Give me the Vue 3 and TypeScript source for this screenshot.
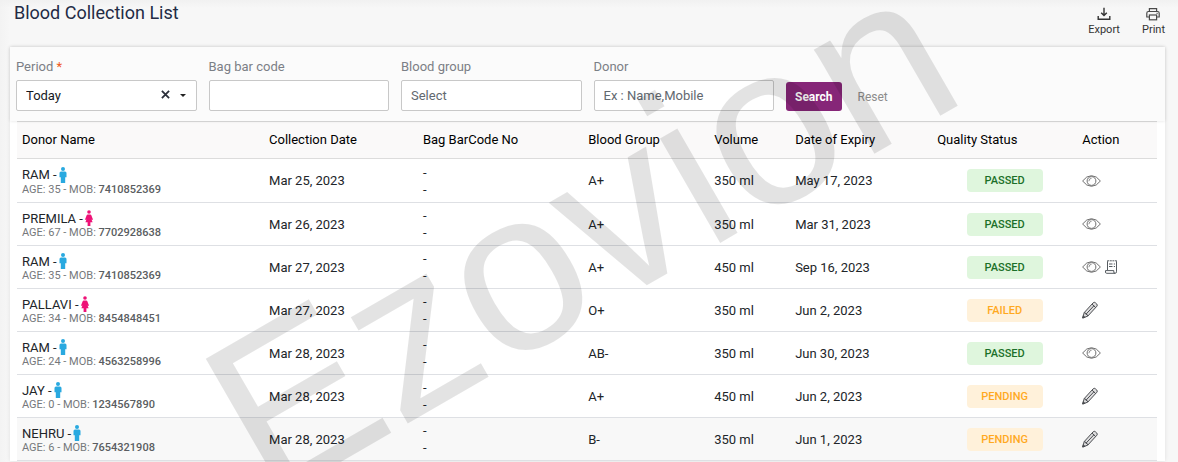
<script setup lang="ts">
import { ref } from 'vue'

type Status = 'PASSED' | 'FAILED' | 'PENDING'
type Gender = 'male' | 'female'
type Action = 'view' | 'report' | 'edit'

interface Collection {
  name: string
  gender: Gender
  age: number
  mobile: string
  collected: string
  group: string
  volume: string
  expiry: string
  status: Status
  actions: Action[]
}

const columns = [
  { label: 'Donor Name', key: 'name' },
  { label: 'Collection Date', key: 'date' },
  { label: 'Bag BarCode No', key: 'bag' },
  { label: 'Blood Group', key: 'group' },
  { label: 'Volume', key: 'volume' },
  { label: 'Date of Expiry', key: 'expiry' },
  { label: 'Quality Status', key: 'status' },
  { label: 'Action', key: 'action' },
]

const rows: Collection[] = [
  { name: 'RAM', gender: 'male', age: 35, mobile: '7410852369', collected: 'Mar 25, 2023', group: 'A+', volume: '350 ml', expiry: 'May 17, 2023', status: 'PASSED', actions: ['view'] },
  { name: 'PREMILA', gender: 'female', age: 67, mobile: '7702928638', collected: 'Mar 26, 2023', group: 'A+', volume: '350 ml', expiry: 'Mar 31, 2023', status: 'PASSED', actions: ['view'] },
  { name: 'RAM', gender: 'male', age: 35, mobile: '7410852369', collected: 'Mar 27, 2023', group: 'A+', volume: '450 ml', expiry: 'Sep 16, 2023', status: 'PASSED', actions: ['view', 'report'] },
  { name: 'PALLAVI', gender: 'female', age: 34, mobile: '8454848451', collected: 'Mar 27, 2023', group: 'O+', volume: '350 ml', expiry: 'Jun 2, 2023', status: 'FAILED', actions: ['edit'] },
  { name: 'RAM', gender: 'male', age: 24, mobile: '4563258996', collected: 'Mar 28, 2023', group: 'AB-', volume: '350 ml', expiry: 'Jun 30, 2023', status: 'PASSED', actions: ['view'] },
  { name: 'JAY', gender: 'male', age: 0, mobile: '1234567890', collected: 'Mar 28, 2023', group: 'A+', volume: '450 ml', expiry: 'Jun 2, 2023', status: 'PENDING', actions: ['edit'] },
  { name: 'NEHRU', gender: 'male', age: 6, mobile: '7654321908', collected: 'Mar 28, 2023', group: 'B-', volume: '350 ml', expiry: 'Jun 1, 2023', status: 'PENDING', actions: ['edit'] },
]

const period = ref('Today')
const bagCode = ref('')
const group = ref('')
const donor = ref('')

function reset() {
  period.value = 'Today'
  bagCode.value = ''
  group.value = ''
  donor.value = ''
}
</script>

<template>
  <main class="page">
    <header class="top">
      <h1>Blood Collection List</h1>
      <div class="tools">
        <button type="button" class="tool">
          <svg width="14" height="14" viewBox="0 0 14 14" fill="none" stroke="#333" stroke-width="1.4">
            <path d="M7 0.8V8.5M4.2 5.8L7 8.6L9.8 5.8" />
            <path d="M1.2 9V12.2H12.8V9" />
          </svg>
          Export
        </button>
        <button type="button" class="tool">
          <svg width="14" height="14" viewBox="0 0 14 14" fill="none" stroke="#4a4a4a" stroke-width="1.2">
            <path d="M3.4 4.5V1.6H10.6V4.5" />
            <path d="M3.2 10H0.8V6.2Q0.8 4.5 2.4 4.5H11.6Q13.2 4.5 13.2 6.2V10H10.8" />
            <rect x="3.4" y="8" width="7.2" height="4.8" />
            <path d="M10.6 6.3H11.6" />
          </svg>
          Print
        </button>
      </div>
    </header>

    <section class="card">
      <form class="filters" @submit.prevent>
        <div class="field">
          <label for="period">Period <span class="req">*</span></label>
          <div class="control">
            <select id="period" v-model="period" class="box">
              <option value=""></option>
              <option>Today</option>
              <option>Yesterday</option>
            </select>
            <button type="button" class="clear" aria-label="Clear period" @click="period = ''">
              <svg width="9" height="9" viewBox="0 0 10 10" stroke="#2b2f3a" stroke-width="2">
                <path d="M1 1L9 9M9 1L1 9" />
              </svg>
            </button>
            <svg class="caret" width="6" height="3" viewBox="0 0 6 3"><path d="M0 0H6L3 3Z" fill="#222" /></svg>
          </div>
        </div>
        <div class="field">
          <label for="bag">Bag bar code</label>
          <input id="bag" v-model="bagCode" type="text" class="box" />
        </div>
        <div class="field">
          <label for="group">Blood group</label>
          <select id="group" v-model="group" class="box" :class="{ empty: !group }">
            <option value="">Select</option>
            <option>A+</option>
            <option>AB-</option>
            <option>B-</option>
            <option>O+</option>
          </select>
        </div>
        <div class="field">
          <label for="donor">Donor</label>
          <input id="donor" v-model="donor" type="text" class="box" placeholder="Ex : Name,Mobile" />
        </div>
        <div class="buttons">
          <button type="submit" class="search">Search</button>
          <button type="button" class="reset" @click="reset">Reset</button>
        </div>
      </form>

      <div class="list">
        <table>
          <colgroup>
            <col v-for="c in columns" :key="c.key" :class="'col-' + c.key" />
          </colgroup>
          <thead>
            <tr>
              <th v-for="c in columns" :key="c.key" scope="col">{{ c.label }}</th>
            </tr>
          </thead>
          <tbody>
            <tr v-for="(r, i) in rows" :key="i" :class="{ hovered: i === 6 }">
              <td class="who">
                <div class="donor">
                  <span>{{ r.name }} -</span>
                  <svg v-if="r.gender === 'male'" width="8" height="16" viewBox="0 0 8 16" fill="#29a9e0">
                    <circle cx="4" cy="2" r="2" />
                    <path d="M2 4.5H6Q7.5 4.5 7.5 6V10.2H6.2V16H1.8V10.2H0.5V6Q0.5 4.5 2 4.5Z" />
                  </svg>
                  <svg v-else width="8" height="16" viewBox="0 0 8 16" fill="#ee1277">
                    <circle cx="4" cy="2" r="1.8" />
                    <path d="M2.6 4.4H5.4L6.2 5L8 9.4L6.9 10L6.2 8.8L7.6 12.2H5.4V16H2.6V12.2H0.4L1.8 8.8L1.1 10L0 9.4L1.8 5Z" />
                  </svg>
                </div>
                <div class="meta">AGE: {{ r.age }} - MOB: <b>{{ r.mobile }}</b></div>
              </td>
              <td>{{ r.collected }}</td>
              <td class="bag"><div>-</div><div>-</div></td>
              <td>{{ r.group }}</td>
              <td>{{ r.volume }}</td>
              <td>{{ r.expiry }}</td>
              <td class="status"><span class="badge" :class="r.status.toLowerCase()">{{ r.status }}</span></td>
              <td>
                <div class="actions">
                  <button v-for="a in r.actions" :key="a" type="button" :aria-label="a">
                    <svg v-if="a === 'view'" width="19" height="12" viewBox="0 0 19 12" fill="none" stroke="#707070">
                      <path d="M0.6 6Q4.5 0.7 9.5 0.7T18.4 6Q14.5 11.3 9.5 11.3T0.6 6Z" />
                      <circle cx="9.5" cy="6" r="4.4" />
                      <path d="M9.6 3.2Q6.9 3.5 6.9 6.2" stroke-width="0.8" />
                    </svg>
                    <svg v-else-if="a === 'report'" width="12" height="14" viewBox="0 0 12 14" fill="none" stroke="#555b60">
                      <path d="M2.5 10V1.2M11.5 1.2V11.8Q11.5 13.3 10 13.3H1.6Q0.5 13.3 0.5 12V10.6H8.8V12Q8.8 13.3 10 13.3" />
                      <path d="M2.2 0.8H11.8" stroke-dasharray="2 0.6" />
                      <path d="M4 4H7.5M4 6.5H7.5M8.8 4H10M8.8 6.5H10" stroke-width="1.1" />
                    </svg>
                    <svg v-else width="16" height="18" viewBox="0 0 16 18" fill="none" stroke="#4a4c50" stroke-linejoin="round">
                      <path d="M0.7 17L2.2 11.6L11.2 1.8Q12.2 0.7 13.4 1.8L14.8 3.1Q15.8 4.1 14.9 5.2L5.8 15.1Z" fill="#dededf" />
                      <path d="M2.2 11.6Q3.8 11.5 4 13.2Q5.7 13.3 5.8 15.1M10 3.1L13.6 6.5M4 13.2L11.9 4.8" />
                      <path d="M0.7 17L1.3 14.8L2.8 16.3Z" fill="#4a4c50" />
                    </svg>
                  </button>
                </div>
              </td>
            </tr>
          </tbody>
        </table>
      </div>
    </section>

    <svg class="watermark" aria-hidden="true">
      <text transform="translate(268 504) rotate(-30)">Ezovion</text>
    </svg>
  </main>
</template>

<style>
body {
  margin: 0;
  background: #f7f7f7;
}
</style>

<style scoped>
.page {
  position: relative;
  height: 100vh;
  overflow: hidden;
  padding: 0 13px 0 10px;
  box-sizing: border-box;
  background:
    linear-gradient(to bottom, #f1f1f1, rgba(247, 247, 247, 0) 8px),
    linear-gradient(to right, #f3f3f3, rgba(247, 247, 247, 0) 10px),
    #f7f7f7;
  font-family: Roboto, 'Liberation Sans', sans-serif;
  font-size: 13px;
  color: #212529;
}

button,
input,
select {
  font: inherit;
  margin: 0;
}

button {
  border: 0;
  padding: 0;
  background: none;
  color: inherit;
  cursor: pointer;
}

svg {
  display: block;
}

.top {
  display: flex;
  justify-content: space-between;
  height: 47px;
  padding-left: 4px;
}

h1 {
  margin: 0;
  font-size: 18px;
  font-weight: 400;
  line-height: 26px;
  color: #232b45;
}

.tools {
  display: flex;
  align-items: flex-start;
  gap: 22px;
  padding-top: 7px;
}

.tool {
  display: flex;
  flex-direction: column;
  align-items: center;
  gap: 2px;
  font-size: 11px;
  line-height: 14px;
  color: #333;
}

.card {
  background: #fff;
  box-shadow: 0 0 4px rgba(0, 0, 0, 0.1);
}

.filters {
  position: relative;
  display: grid;
  grid-template-columns: repeat(6, 1fr);
  align-items: end;
  padding: 12px 0 10px;
  background: #fbfbfb;
  box-shadow: 0 0 3px rgba(0, 0, 0, 0.12);
}

.field {
  padding: 0 6px;
}

label {
  display: block;
  margin-bottom: 5px;
  line-height: 16px;
  color: #7b7f86;
}

.req {
  color: #f05a1a;
}

.control {
  position: relative;
}

.box {
  display: block;
  width: 100%;
  height: 31px;
  box-sizing: border-box;
  padding: 0 9px;
  border: 1px solid #c8c8c8;
  border-radius: 2px;
  background: #fff;
  appearance: none;
  color: #16191e;
  outline: none;
}

.box::placeholder,
.box.empty {
  color: #62686f;
  opacity: 1;
}

.clear {
  position: absolute;
  top: 10px;
  right: 27px;
}

.caret {
  position: absolute;
  top: 14px;
  right: 11px;
  pointer-events: none;
}

.buttons {
  display: flex;
  gap: 16px;
  padding-left: 6px;
}

.search {
  height: 29px;
  padding: 0 9px;
  border-radius: 3px;
  background: #862678;
  font-size: 12px;
  font-weight: 700;
  color: #fff;
}

.reset {
  font-size: 12px;
  color: #8c8c8c;
}

.list {
  padding: 0 8px 0 7px;
}

table {
  width: 100%;
  table-layout: fixed;
  border-collapse: collapse;
}

.col-name { width: 21.67%; }
.col-date { width: 13.5%; }
.col-bag { width: 14.5%; }
.col-group { width: 11.05%; }
.col-volume { width: 7.1%; }
.col-expiry { width: 12.46%; }
.col-status { width: 12.72%; }
.col-action { width: 7%; }

th,
td {
  box-sizing: border-box;
  padding: 0 5px;
  text-align: left;
  vertical-align: middle;
  white-space: nowrap;
}

th {
  height: 37px;
  padding-bottom: 2px;
  border-top: 1px solid #dcdcdc;
  border-bottom: 1px solid #dcdcdc;
  background: #faf9f9;
  font-weight: 400;
  color: #000;
}

td {
  height: 43px;
  border-bottom: 1px solid #dee0e4;
}

tbody tr:first-child td {
  height: 44px;
}

.hovered {
  background: #f8f8f8;
}

.who {
  padding-top: 2px;
}

.donor {
  display: flex;
  align-items: center;
  gap: 2px;
  height: 16px;
}

.meta {
  font-size: 11px;
  line-height: 14px;
  color: #75787b;
}

.meta b {
  font-weight: 500;
  color: #5a5d61;
}

.bag {
  line-height: 17px;
}

.status {
  text-align: center;
}

.badge {
  display: inline-block;
  width: 76px;
  border-radius: 4px;
  font-size: 11px;
  font-weight: 500;
  line-height: 23px;
}

.passed {
  background: #dff6dd;
  color: #1b7029;
}

.failed,
.pending {
  background: #fff1da;
  color: #ffa91f;
}

.actions {
  display: flex;
  align-items: center;
  gap: 4px;
}

.watermark {
  position: absolute;
  top: 0;
  left: 0;
  width: 100%;
  height: 100%;
  pointer-events: none;
  font-family: 'Liberation Sans', Arial, sans-serif;
  font-size: 228px;
  fill: rgba(0, 0, 0, 0.11);
}
</style>
